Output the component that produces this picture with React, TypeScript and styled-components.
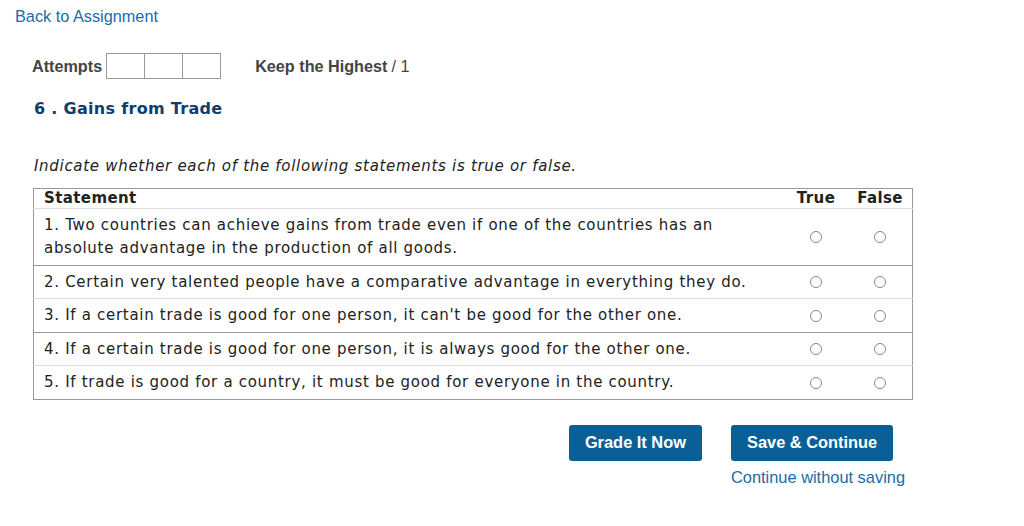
import styled, { createGlobalStyle } from "styled-components";

const GlobalStyle = createGlobalStyle`
  body {
    margin: 0;
    background: #fff;
    font-family: "Liberation Sans", Arial, sans-serif;
  }
`;

const Page = styled.div`
  padding: 6px 0 0 15px;
  width: 1009px;
`;

const BackLink = styled.a`
  display: inline-block;
  font-size: 16.3px;
  color: #1b6ca8;
  text-decoration: none;
  line-height: 20px;
`;

const AttemptsBar = styled.div`
  display: flex;
  align-items: center;
  margin: 27px 0 0 17px;
  height: 26px;
  color: #444;
  font-size: 16.2px;
`;

const Label = styled.span`
  font-weight: bold;
  margin-right: 4px;
`;

const Boxes = styled.div`
  display: flex;
  margin-right: 34px;
`;

const Box = styled.span`
  width: 37px;
  height: 24px;
  border: 1px solid #999;
  & + & {
    border-left: none;
  }
`;

const Title = styled.h2`
  margin: 20px 0 0 19px;
  font-family: "DejaVu Sans", Verdana, sans-serif;
  font-size: 16px;
  letter-spacing: 0.3px;
  font-weight: bold;
  color: #0e3e6e;
  line-height: 20px;
`;

const Question = styled.div`
  margin: 37px 0 0 18px;
  width: 880px;
  font-family: "DejaVu Sans", Verdana, sans-serif;
  letter-spacing: 0.7px;
  color: #222;
`;

const Prompt = styled.p`
  margin: 0 0 12px 1px;
  font-style: italic;
  font-size: 15px;
  line-height: 20px;
`;

const Table = styled.table`
  width: 880px;
  border-collapse: collapse;
  border: 1px solid #999;
  font-size: 15px;
`;

const Th = styled.th<{ $center?: boolean }>`
  text-align: ${({ $center }) => ($center ? "center" : "left")};
  padding: 0 ${({ $center }) => ($center ? "0" : "10px")};
  height: 19px;
  line-height: 17px;
  font-weight: bold;
  letter-spacing: 0.4px;
  border-bottom: 1px solid #ddd;
  width: ${({ $center }) => ($center ? "64px" : "auto")};
`;

const Tr = styled.tr<{ $dark?: boolean }>`
  border-bottom: 1px solid ${({ $dark }) => ($dark ? "#999" : "#ddd")};
`;

const Td = styled.td`
  padding: 5px 10px 4.5px;
  line-height: 23px;
  height: 23px;
`;

const RadioCell = styled.td`
  text-align: center;
  vertical-align: middle;
`;

const Radio = styled.span`
  display: inline-block;
  width: 10px;
  height: 10px;
  border: 1px solid #8a8a8a;
  border-radius: 50%;
  vertical-align: middle;
`;

const Actions = styled.div`
  display: flex;
  justify-content: flex-end;
  gap: 29px;
  width: 890px;
  margin-top: 25px;
`;

const ButtonGroup = styled.div`
  display: flex;
  flex-direction: column;
  align-items: flex-start;
`;

const Button = styled.button`
  height: 36px;
  padding: 0 16px;
  background: #0a5f96;
  color: #fff;
  border: none;
  border-radius: 3px;
  font-family: "Liberation Sans", Arial, sans-serif;
  font-weight: bold;
  font-size: 16.4px;
`;

const SubLink = styled.a`
  margin-top: 7px;
  font-size: 16.4px;
  color: #1b6ca8;
  text-decoration: none;
`;

const statements = [
  "1. Two countries can achieve gains from trade even if one of the countries has an absolute advantage in the production of all goods.",
  "2. Certain very talented people have a comparative advantage in everything they do.",
  "3. If a certain trade is good for one person, it can't be good for the other one.",
  "4. If a certain trade is good for one person, it is always good for the other one.",
  "5. If trade is good for a country, it must be good for everyone in the country.",
];

export default function App() {
  return (
    <>
      <GlobalStyle />
      <Page>
        <BackLink href="#">Back to Assignment</BackLink>
        <AttemptsBar>
          <Label>Attempts</Label>
          <Boxes>
            <Box />
            <Box />
            <Box />
          </Boxes>
          <Label>Keep the Highest</Label>
          <span>/ 1</span>
        </AttemptsBar>
        <Title>6 . Gains from Trade</Title>
        <Question>
          <Prompt>Indicate whether each of the following statements is true or false.</Prompt>
          <Table>
            <thead>
              <tr>
                <Th>Statement</Th>
                <Th $center>True</Th>
                <Th $center>False</Th>
              </tr>
            </thead>
            <tbody>
              {statements.map((s, i) => (
                <Tr key={i} $dark={i % 2 === 0}>
                  <Td>{s}</Td>
                  <RadioCell>
                    <Radio />
                  </RadioCell>
                  <RadioCell>
                    <Radio />
                  </RadioCell>
                </Tr>
              ))}
            </tbody>
          </Table>
        </Question>
        <Actions>
          <Button>Grade It Now</Button>
          <ButtonGroup>
            <Button>Save &amp; Continue</Button>
            <SubLink href="#">Continue without saving</SubLink>
          </ButtonGroup>
        </Actions>
      </Page>
    </>
  );
}
